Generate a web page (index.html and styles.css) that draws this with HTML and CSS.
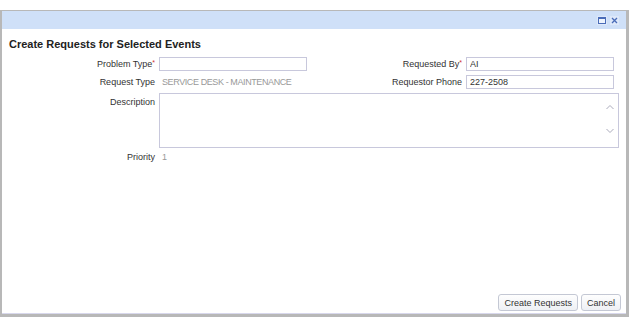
FILE: index.html
```html
<!DOCTYPE html>
<html lang="en">
<head>
  <meta charset="UTF-8" />
  <title>Create Requests</title>
  <link rel="stylesheet" href="styles.css">
</head>
<body>
  <div class="dialog">
    <div class="titlebar">
      <span class="tb-icon">
        <svg width="8" height="7" viewBox="0 0 8 7"><rect x="0.5" y="0.5" width="7" height="6" fill="#eef4fd" stroke="#4a6cb8"/><rect x="0.5" y="0.5" width="7" height="1.5" fill="#4a6cb8"/></svg>
      </span>
      <span class="tb-icon">
        <svg width="7" height="7" viewBox="0 0 7 7"><path d="M1 1 L6 6 M6 1 L1 6" stroke="#4a6cb8" stroke-width="1.3"/></svg>
      </span>
    </div>
    <div class="content">
      <h1>Create Requests for Selected Events</h1>
      <form class="form">
        <label class="lbl">Problem Type<span class="req">*</span></label>
        <input class="field" type="text">
        <label class="lbl">Requested By<span class="req">*</span></label>
        <input class="field" type="text" value="AI">

        <label class="lbl">Request Type</label>
        <span class="val">SERVICE DESK - MAINTENANCE</span>
        <label class="lbl">Requestor Phone</label>
        <input class="field" type="text" value="227-2508">

        <label class="lbl lbl-top">Description</label>
        <div class="area">
          <span class="arrows">
            <svg width="8" height="30" viewBox="0 0 8 30"><path d="M0.5 5 L4 1.5 L7.5 5" fill="none" stroke="#aab" stroke-width="1"/><path d="M0.5 25 L4 28.5 L7.5 25" fill="none" stroke="#aab" stroke-width="1"/></svg>
          </span>
        </div>

        <label class="lbl">Priority</label>
        <span class="val">1</span>
      </form>
    </div>
    <div class="buttons">
      <button type="button">Create Requests</button>
      <button type="button">Cancel</button>
    </div>
  </div>
</body>
</html>
```

FILE: styles.css
```css
body {
  margin: 0;
  padding-top: 10px;
  background-color: #fff;
  font-family: "Liberation Sans", Arial, sans-serif;
  font-size: 9px;
  color: #333;
}
.dialog {
  width: 624px;
  height: 303px;
  border: 2px solid #b8b8b8;
  border-top-width: 1px;
  border-right-width: 3px;
  border-bottom: 3px solid #b8b8b8;
  background-color: #fff;
  display: flex;
  flex-direction: column;
  box-shadow: inset 0 -1px 0 #d8d8ec;
}
.titlebar {
  height: 18px;
  background-color: #cfe0f8;
  display: flex;
  justify-content: flex-end;
  align-items: center;
  gap: 3px;
  padding-right: 7px;
}
.tb-icon {
  display: flex;
  padding: 1px;
  background-color: #dde8fa;
}
.content {
  flex: 1;
  padding: 0 7px;
}
h1 {
  margin: 9px 0 7px;
  font-size: 11px;
  font-weight: bold;
  color: #222;
}
.form {
  display: grid;
  grid-template-columns: 146px 148px 1fr 153px;
  column-gap: 4px;
  row-gap: 4px;
  align-items: center;
}
.lbl {
  text-align: right;
  white-space: nowrap;
}
.lbl-top {
  align-self: start;
  padding-top: 4px;
}
.req {
  color: #d03030;
  font-size: 7px;
  vertical-align: top;
}
.field {
  width: 148px;
  height: 14px;
  box-sizing: border-box;
  border: 1px solid #c8c8dc;
  padding: 0 3px;
  margin: 0;
  font-family: inherit;
  font-size: 9px;
  color: #333;
}
.val {
  color: #999;
  padding-left: 3px;
  white-space: nowrap;
  letter-spacing: -0.4px;
}
.area {
  grid-column: 2 / 5;
  height: 55px;
  box-sizing: border-box;
  border: 1px solid #c8c8dc;
  position: relative;
}
.arrows {
  position: absolute;
  right: 4px;
  top: 10px;
}
.buttons {
  display: flex;
  justify-content: flex-end;
  gap: 3px;
  padding: 0 5px 3px 0;
}
button {
  height: 17px;
  padding: 0 5px;
  font-family: inherit;
  font-size: 9px;
  color: #333;
  background: linear-gradient(#fefefe, #eef0f4);
  border: 1px solid #c4c8d4;
  border-radius: 3px;
}
```
